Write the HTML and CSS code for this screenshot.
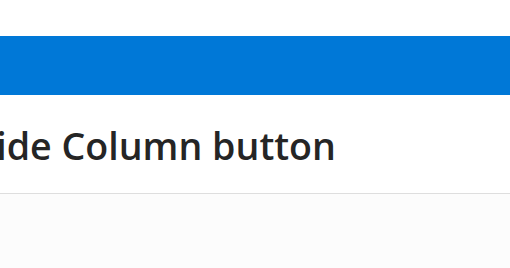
FILE: index.html
```html
<!DOCTYPE html>
<html lang="en">
<head>
<meta charset="utf-8">
<title>Hide Column button</title>
<link rel="stylesheet" href="styles.css">
</head>
<body>
<div class="page">
  <div class="topspace"></div>
  <div class="bluebar"></div>
  <header class="titlebar">
    <h1 class="title">Hide Column button</h1>
  </header>
  <main class="content"></main>
</div>
</body>
</html>
```
FILE: styles.css
```css
html, body {
  margin: 0;
  padding: 0;
  background: #ffffff;
  overflow: hidden;
}
.page {
  width: 510px;
  height: 268px;
  display: flex;
  flex-direction: column;
  overflow: hidden;
}
.topspace {
  height: 36px;
  flex: none;
}
.bluebar {
  height: 59px;
  background: #0078d7;
  flex: none;
}
.titlebar {
  height: 99px;
  flex: none;
  display: flex;
  align-items: center;
  padding-top: 4px;
  border-bottom: 1px solid #dedede;
  box-sizing: border-box;
}
.title {
  margin: 0 0 0 -32px;
  font-family: "Open Sans", "Noto Sans", sans-serif;
  font-weight: 600;
  font-size: 37.6px;
  line-height: 44px;
  color: #252525;
  white-space: nowrap;
}
.content {
  flex: 1;
  background: #fcfcfc;
}
```
